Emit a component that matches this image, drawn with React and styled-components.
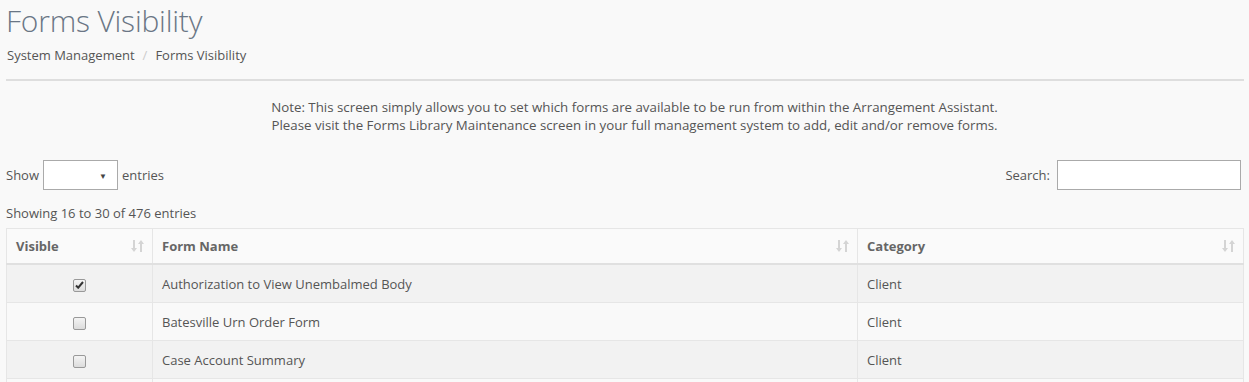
import React from "react";
import styled, { createGlobalStyle } from "styled-components";

const GlobalStyle = createGlobalStyle`
  html, body {
    margin: 0;
    padding: 0;
    background: #f9f9f9;
    font-family: "Open Sans", "Liberation Sans", sans-serif;
    color: #555;
  }
`;

const rows = [
  { visible: true, name: "Authorization to View Unembalmed Body", category: "Client" },
  { visible: false, name: "Batesville Urn Order Form", category: "Client" },
  { visible: false, name: "Case Account Summary", category: "Client" },
  { visible: false, name: "Cemetery Interment Order", category: "Client" },
];

function SortIcon() {
  return (
    <svg width="13" height="14" viewBox="0 0 13 14">
      <path d="M2 1h2v8h2l-3 4-3-4h2z" fill="#d4d4d4" />
      <path d="M9 13h2V5h2l-3-4-3 4h2z" fill="#d4d4d4" />
    </svg>
  );
}

function App() {
  return (
    <Page>
      <GlobalStyle />
      <Title>Forms Visibility</Title>
      <Breadcrumb>
        <span>System Management</span>
        <Sep>/</Sep>
        <span>Forms Visibility</span>
      </Breadcrumb>
      <Rule />
      <Note>
        Note: This screen simply allows you to set which forms are available to be run from within the Arrangement Assistant.
        <br />
        Please visit the Forms Library Maintenance screen in your full management system to add, edit and/or remove forms.
      </Note>
      <Controls>
        <Label>
          Show
          <Select>
            <Caret>▼</Caret>
          </Select>
          entries
        </Label>
        <Label>
          Search:
          <SearchInput />
        </Label>
      </Controls>
      <Info>Showing 16 to 30 of 476 entries</Info>
      <Table>
        <colgroup>
          <col style={{ width: 146 }} />
          <col style={{ width: 705 }} />
          <col />
        </colgroup>
        <thead>
          <tr>
            <Th>
              <ThInner>Visible<SortIcon /></ThInner>
            </Th>
            <Th>
              <ThInner>Form Name<SortIcon /></ThInner>
            </Th>
            <Th>
              <ThInner>Category<SortIcon /></ThInner>
            </Th>
          </tr>
        </thead>
        <tbody>
          {rows.map((r, i) => (
            <Row key={i} $odd={i % 2 === 0}>
              <CheckCell>
                <Check $checked={r.visible}>
                  {r.visible && (
                    <svg width="9" height="8" viewBox="0 0 9 8">
                      <path d="M1 4.5l2.2 2.2L8 1" stroke="#333" strokeWidth="2" fill="none" />
                    </svg>
                  )}
                </Check>
              </CheckCell>
              <Td>{r.name}</Td>
              <Td>{r.category}</Td>
            </Row>
          ))}
        </tbody>
      </Table>
    </Page>
  );
}

const Page = styled.div`
  padding: 0 5px 0 6px;
  height: 382px;
  overflow: hidden;
`;

const Title = styled.h1`
  margin: 0;
  padding-top: 2px;
  font-size: 30px;
  font-weight: 300;
  line-height: 38px;
  color: #6a7685;
  letter-spacing: -0.2px;
`;

const Breadcrumb = styled.div`
  margin-top: 6px;
  font-size: 13px;
  line-height: 18px;
  color: #555;
  padding-left: 1px;
`;

const Sep = styled.span`
  color: #ccc;
  padding: 0 8px;
`;

const Rule = styled.div`
  margin-top: 15px;
  height: 2px;
  background: #dedede;
`;

const Note = styled.div`
  margin-top: 17px;
  text-align: center;
  font-size: 13.3px;
  line-height: 18px;
  color: #555;
  padding-left: 19px;
`;

const Controls = styled.div`
  margin-top: 26px;
  display: flex;
  justify-content: space-between;
  align-items: center;
  padding-right: 3px;
`;

const Label = styled.label`
  display: flex;
  align-items: center;
  gap: 4px;
  font-size: 13px;
  color: #555;
`;

const Select = styled.div`
  width: 75px;
  height: 30px;
  border: 1px solid #aaa;
  background: #fff;
  display: flex;
  align-items: center;
  justify-content: flex-end;
  padding-right: 10px;
  box-sizing: border-box;
`;

const Caret = styled.span`
  font-size: 8px;
  color: #444;
`;

const SearchInput = styled.div`
  width: 182px;
  height: 28px;
  border: 1px solid #aaa;
  background: #fff;
  margin-left: 3px;
`;

const Info = styled.div`
  margin-top: 14px;
  font-size: 13px;
  color: #555;
`;

const Table = styled.table`
  margin-top: 6px;
  width: 1238px;
  border-collapse: collapse;
  table-layout: fixed;
  border-left: 1px solid #e6e6e6;
  border-right: 1px solid #e6e6e6;
  font-size: 13px;
`;

const Th = styled.th`
  height: 34px;
  padding: 0 8px 0 9px;
  background: #fafafa;
  border: 1px solid #e6e6e6;
  border-bottom: 2px solid #e0e0e0;
  text-align: left;
  font-weight: 700;
  color: #666;
`;

const ThInner = styled.div`
  display: flex;
  align-items: center;
  justify-content: space-between;
`;

const Row = styled.tr`
  background: ${(p) => (p.$odd ? "#f2f2f2" : "#f9f9f9")};
`;

const Td = styled.td`
  height: 37px;
  padding: 0 9px;
  border: 1px solid #e6e6e6;
  color: #555;
`;

const CheckCell = styled(Td)`
  text-align: center;
`;

const Check = styled.span`
  display: inline-flex;
  align-items: center;
  justify-content: center;
  width: 11px;
  height: 11px;
  border: 1px solid #999;
  border-radius: 2px;
  background: linear-gradient(#f4f4f4, #dcdcdc);
  vertical-align: middle;
  svg {
    margin-top: -1px;
  }
`;

export default App;
